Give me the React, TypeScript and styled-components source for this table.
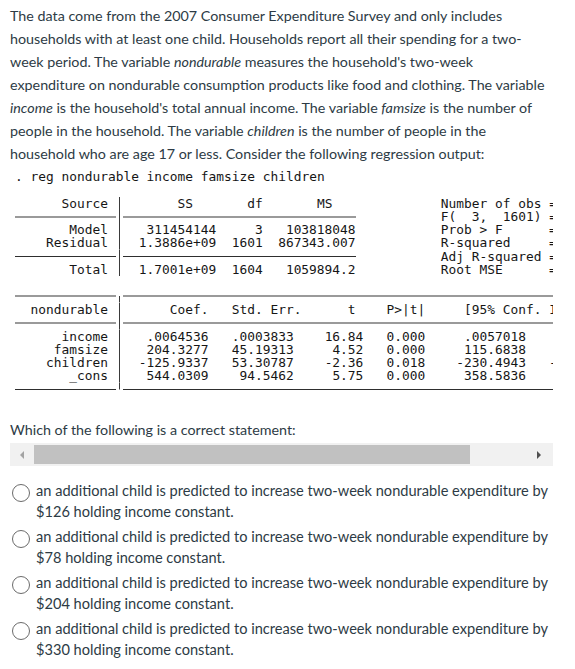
import React from "react";
import styled, { createGlobalStyle } from "styled-components";

const GlobalStyle = createGlobalStyle`
  html, body {
    margin: 0;
    padding: 0;
    background: #ffffff;
  }
  body {
    font-family: Lato, "Open Sans", "Liberation Sans", sans-serif;
    color: #2d3b45;
  }
`;

const Page = styled.div`
  width: 575px;
  padding: 4px 10px 0 10px;
  box-sizing: border-box;
  overflow: hidden;
`;

const Intro = styled.p`
  margin: 0;
  font-size: 14.3px;
  line-height: 23px;
  white-space: nowrap;

  em {
    font-style: italic;
  }
`;

const Output = styled.div`
  margin-top: 5px;
  width: 543px;
  padding-left: 5px;
  box-sizing: border-box;
  overflow: hidden;
  font-family: "DejaVu Sans Mono", "Liberation Mono", monospace;
  font-size: 12.87px;
  color: #161616;
`;

const Row = styled.div`
  display: flex;
  height: 13.3px;
  line-height: 13.3px;
  white-space: pre;
`;

const Cell = styled.span<{ $w: number; $right?: boolean }>`
  flex: 0 0 ${(p) => p.$w}ch;
  width: ${(p) => p.$w}ch;
  text-align: ${(p) => (p.$right ? "right" : "left")};
`;

const Bar = styled.span<{ $part?: "full" | "top" | "bottom" }>`
  flex: 0 0 1ch;
  width: 1ch;
  background: linear-gradient(#3a3a3a, #3a3a3a)
    ${(p) => (p.$part === "bottom" ? "center bottom" : p.$part === "top" ? "center top" : "center")} /
    1px ${(p) => (p.$part && p.$part !== "full" ? "50%" : "100%")} no-repeat;
`;

const Seg = styled.span<{ $w: number; $soft?: boolean }>`
  flex: 0 0 ${(p) => p.$w}ch;
  width: ${(p) => p.$w}ch;
  background: linear-gradient(
      ${(p) => (p.$soft ? "#9a9a9a" : "#2e2e2e")},
      ${(p) => (p.$soft ? "#9a9a9a" : "#2e2e2e")}
    )
    left center / 100% ${(p) => (p.$soft ? "2px" : "1px")} no-repeat;
`;

const Scroll = styled.div`
  margin-top: 47px;
  width: 543px;
  height: 23px;
  background: #f1f1f1;
  display: flex;
  align-items: center;
  box-sizing: border-box;
  padding: 0 12px 0 10px;
`;

const Arrow = styled.span<{ $dir: "left" | "right" }>`
  width: 0;
  height: 0;
  border-top: 4.5px solid transparent;
  border-bottom: 4.5px solid transparent;
  ${(p) =>
    p.$dir === "left"
      ? "border-right: 4.5px solid #a3a3a3;"
      : "border-left: 4.5px solid #505050;"}
`;

const Thumb = styled.span`
  height: 19px;
  margin-left: 10px;
  width: 436px;
  background: #c1c1c1;
`;

const Track = styled.span`
  flex: 1;
`;

const Prompt = styled.p`
  margin: -48px 0 0 0;
  font-size: 14.3px;
  line-height: 23px;
`;

const Options = styled.div`
  margin-top: 39px;
  display: flex;
  flex-direction: column;
  gap: 4px;
`;

const Option = styled.label`
  display: flex;
  align-items: flex-start;
  gap: 6px;
  font-size: 14.6px;
  line-height: 21px;
`;

const Radio = styled.span`
  flex: 0 0 18px;
  width: 18px;
  height: 18px;
  margin-top: 4px;
  margin-left: 2px;
  border: 1px solid #6b6b6b;
  border-radius: 50%;
  box-sizing: border-box;
  background: #ffffff;
`;

const OptionText = styled.span`
  width: 522px;
`;

const stats = [
  "Number of obs =    1605",
  "F(  3,  1601) =  119.69",
  "Prob > F      =  0.0000",
  "R-squared     =  0.1832",
  "Adj R-squared =  0.1817",
  "Root MSE      =  931.31",
];

const anova = [
  { label: "Model", ss: "311454144", df: "3", ms: "103818048" },
  { label: "Residual", ss: "1.3886e+09", df: "1601", ms: "867343.007" },
];

const coefs = [
  ["income", ".0064536", ".0003833", "16.84", "0.000", ".0057018", ".0072055"],
  ["famsize", "204.3277", "45.19313", "4.52", "0.000", "115.6838", "293.0716"],
  ["children", "-125.9337", "53.30787", "-2.36", "0.018", "-230.4943", "-21.37311"],
  ["_cons", "544.0309", "94.5462", "5.75", "0.000", "358.5836", "729.4782"],
];

const answers = ["$126", "$78", "$204", "$330"];

const StataOutput = () => (
  <Output>
    <Row>. reg nondurable income famsize children</Row>
    <Row> </Row>
    <Row>
      <Cell $w={12} $right>Source</Cell>
      <Cell $w={1}> </Cell>
      <Bar />
      <Cell $w={9} $right>SS</Cell>
      <Cell $w={9} $right>df</Cell>
      <Cell $w={9} $right>MS</Cell>
      <Cell $w={14}> </Cell>
      <Cell $w={24}>{stats[0]}</Cell>
    </Row>
    <Row>
      <Seg $w={13} $soft />
      <Bar />
      <Seg $w={30} $soft />
      <Cell $w={11}> </Cell>
      <Cell $w={24}>{stats[1]}</Cell>
    </Row>
    {anova.map((r, i) => (
      <Row key={r.label}>
        <Cell $w={12} $right>{r.label}</Cell>
        <Cell $w={1}> </Cell>
        <Bar />
        <Cell $w={12} $right>{r.ss}</Cell>
        <Cell $w={6} $right>{r.df}</Cell>
        <Cell $w={12} $right>{r.ms}</Cell>
        <Cell $w={11}> </Cell>
        <Cell $w={24}>{stats[2 + i]}</Cell>
      </Row>
    ))}
    <Row>
      <Seg $w={13} />
      <Bar />
      <Seg $w={30} />
      <Cell $w={11}> </Cell>
      <Cell $w={24}>{stats[4]}</Cell>
    </Row>
    <Row>
      <Cell $w={12} $right>Total</Cell>
      <Cell $w={1}> </Cell>
      <Bar />
      <Cell $w={12} $right>1.7001e+09</Cell>
      <Cell $w={6} $right>1604</Cell>
      <Cell $w={12} $right>1059894.2</Cell>
      <Cell $w={11}> </Cell>
      <Cell $w={24}>{stats[5]}</Cell>
    </Row>
    <Row> </Row>
    <Row>
      <Seg $w={13} $soft />
      <Bar $part="bottom" />
      <Seg $w={64} $soft />
    </Row>
    <Row>
      <Cell $w={12} $right>nondurable</Cell>
      <Cell $w={1}> </Cell>
      <Bar />
      <Cell $w={11} $right>Coef.</Cell>
      <Cell $w={12} $right>Std. Err.</Cell>
      <Cell $w={7} $right>t</Cell>
      <Cell $w={9} $right>P&gt;|t|</Cell>
      <Cell $w={25}>     [95% Conf. Interval]</Cell>
    </Row>
    <Row>
      <Seg $w={13} $soft />
      <Bar />
      <Seg $w={64} $soft />
    </Row>
    {coefs.map((c) => (
      <Row key={c[0]}>
        <Cell $w={12} $right>{c[0]}</Cell>
        <Cell $w={1}> </Cell>
        <Bar />
        <Cell $w={11} $right>{c[1]}</Cell>
        <Cell $w={11} $right>{c[2]}</Cell>
        <Cell $w={9} $right>{c[3]}</Cell>
        <Cell $w={8} $right>{c[4]}</Cell>
        <Cell $w={13} $right>{c[5]}</Cell>
        <Cell $w={12} $right>{c[6]}</Cell>
      </Row>
    ))}
    <Row>
      <Seg $w={13} />
      <Bar $part="top" />
      <Seg $w={64} />
    </Row>
  </Output>
);

export default function App() {
  return (
    <>
      <GlobalStyle />
      <Page>
        <Intro>
          The data come from the 2007 Consumer Expenditure Survey and only includes
          <br />
          households with at least one child. Households report all their spending for a two-
          <br />
          week period. The variable <em>nondurable</em> measures the household's two-week
          <br />
          expenditure on nondurable consumption products like food and clothing. The variable
          <br />
          <em>income</em> is the household's total annual income. The variable <em>famsize</em> is the number of
          <br />
          people in the household. The variable <em>children</em> is the number of people in the
          <br />
          household who are age 17 or less. Consider the following regression output:
        </Intro>
        <StataOutput />
        <Scroll>
          <Arrow $dir="left" />
          <Thumb />
          <Track />
          <Arrow $dir="right" />
        </Scroll>
        <Prompt>Which of the following is a correct statement:</Prompt>
        <Options>
          {answers.map((a) => (
            <Option key={a}>
              <Radio />
              <OptionText>
                an additional child is predicted to increase two-week nondurable expenditure by {a} holding income constant.
              </OptionText>
            </Option>
          ))}
        </Options>
      </Page>
    </>
  );
}
